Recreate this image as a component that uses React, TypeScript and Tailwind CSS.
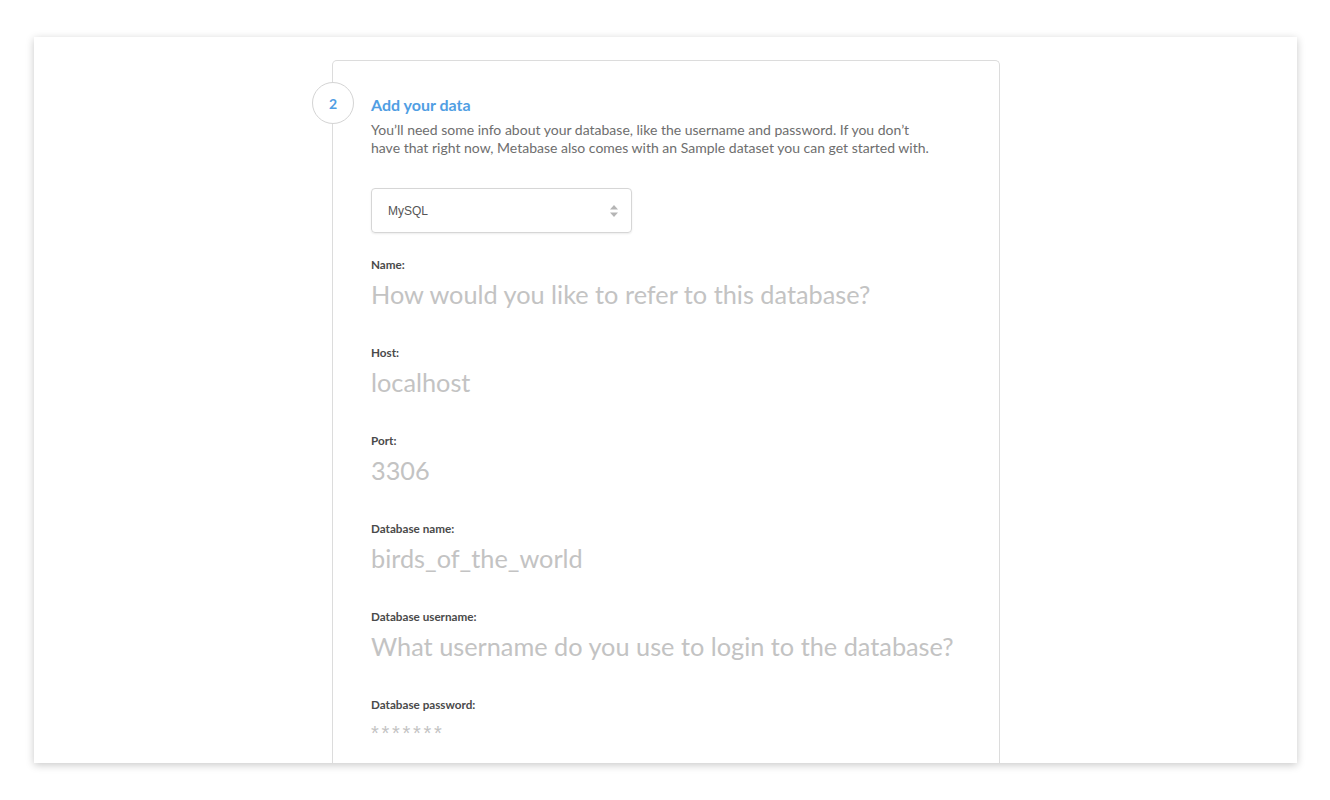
import * as React from 'react'

// ---------------------------------------------------------------------------
// Data
// ---------------------------------------------------------------------------

const fields = [
  { label: 'Name:', placeholder: 'How would you like to refer to this database?' },
  { label: 'Host:', placeholder: 'localhost' },
  { label: 'Port:', placeholder: '3306' },
  { label: 'Database name:', placeholder: 'birds_of_the_world' },
  { label: 'Database username:', placeholder: 'What username do you use to login to the database?' },
]

const font = { fontFamily: 'Lato, "Open Sans", sans-serif' }

// ---------------------------------------------------------------------------
// Pieces
// ---------------------------------------------------------------------------

function SortArrows() {
  return (
    <svg width="8" height="12" viewBox="0 0 8 12" className="fill-[#b5b5b5]">
      <path d="M4 0 L8 4.5 H0 Z" />
      <path d="M4 12 L0 7.5 H8 Z" />
    </svg>
  )
}

function Label({ children }: { children: React.ReactNode }) {
  return <div className="text-[11.7px] font-bold leading-[16px] text-[#4a4a4a]">{children}</div>
}

function Field({ label, placeholder }: { label: string; placeholder: string }) {
  return (
    <div className="h-[88px]">
      <Label>{label}</Label>
      <div className="mt-[6px] text-[25.3px] leading-[32px] text-[#c3c3c3]">{placeholder}</div>
    </div>
  )
}

// ---------------------------------------------------------------------------
// App
// ---------------------------------------------------------------------------

export default function App() {
  return (
    <div className="min-h-[800px] bg-white pt-[37px] pl-[34px]" style={font}>
      <div className="w-[1263px] h-[726px] overflow-hidden bg-white shadow-[0_2px_8px_rgba(0,0,0,0.22)]">
        <div className="relative ml-[298px] mt-[23px] w-[668px] h-[720px] rounded-t-[5px] border border-b-0 border-[#dcdcdc] bg-white">
          {/* Step badge */}
          <div className="absolute left-[-21px] top-[21px] flex h-[42px] w-[42px] items-center justify-center rounded-full border border-[#d4d4d4] bg-white text-[14px] font-bold text-[#509ee3]">
            2
          </div>

          <div className="pl-[38px] pt-[34px]">
            <h2 className="text-[16px] font-bold leading-[20px] text-[#509ee3]">Add your data</h2>
            <p className="mt-[6px] text-[14px] leading-[18px] text-[#6e6e6e]">
              You’ll need some info about your database, like the username and password. If you don’t
              <br />
              have that right now, Metabase also comes with an Sample dataset you can get started with.
            </p>

            {/* Database engine select */}
            <div className="mt-[31px] flex h-[45px] w-[261px] items-center justify-between rounded-[4px] border border-[#d6d6d6] pl-[16px] pr-[13px] shadow-[0_1px_2px_rgba(0,0,0,0.08)]">
              <span className="text-[12px] text-[#555]" style={{ fontFamily: '"Liberation Sans", Arial, sans-serif' }}>
                MySQL
              </span>
              <SortArrows />
            </div>

            <div className="mt-[23px]">
              {fields.map((f) => (
                <Field key={f.label} label={f.label} placeholder={f.placeholder} />
              ))}
              <div>
                <Label>Database password:</Label>
                <div
                  className="mt-[9px] text-[20px] leading-[24px] tracking-[2.7px] text-[#c3c3c3]"
                  style={{ fontFamily: '"Liberation Sans", Arial, sans-serif' }}
                >
                  *******
                </div>
              </div>
            </div>
          </div>
        </div>
      </div>
    </div>
  )
}
